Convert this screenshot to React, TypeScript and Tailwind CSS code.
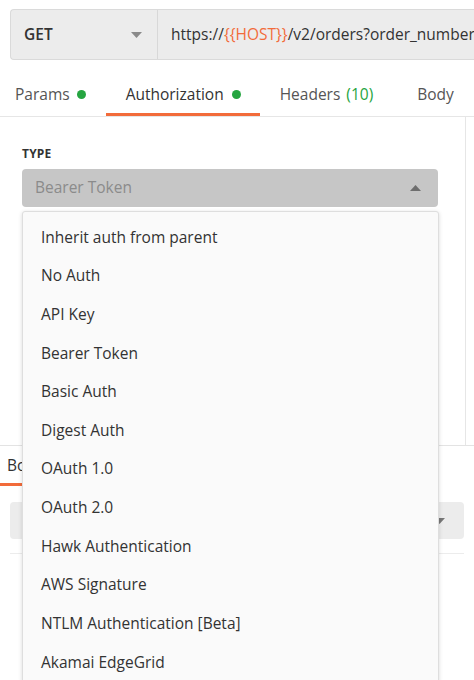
import React from 'react';

const authTypes = [
  'Inherit auth from parent',
  'No Auth',
  'API Key',
  'Bearer Token',
  'Basic Auth',
  'Digest Auth',
  'OAuth 1.0',
  'OAuth 2.0',
  'Hawk Authentication',
  'AWS Signature',
  'NTLM Authentication [Beta]',
  'Akamai EdgeGrid',
];

function Caret({ up = false, className = '' }: { up?: boolean; className?: string }) {
  return (
    <svg width="11" height="6" viewBox="0 0 11 6" className={className}>
      {up ? <path d="M0 6 L5.5 0 L11 6 Z" fill="currentColor" /> : <path d="M0 0 L11 0 L5.5 6 Z" fill="currentColor" />}
    </svg>
  );
}

export default function App() {
  return (
    <div
      className="relative w-[474px] h-[680px] overflow-hidden bg-white text-[#333]"
      style={{ fontFamily: '"Open Sans", "Noto Sans", sans-serif' }}
    >
      {/* Request bar */}
      <div className="pl-[10px] pt-[9px]">
        <div className="flex h-[51px] rounded-l-[4px] border border-r-0 border-[#dadada] bg-[#ececec]">
          <div className="flex w-[147px] shrink-0 items-center justify-between border-r border-[#d8d8d8] pl-[13px] pr-[15px]">
            <span className="text-[15.5px] font-semibold text-[#333]">GET</span>
            <Caret className="text-[#8a8a8a]" />
          </div>
          <div className="flex min-w-0 flex-1 items-center overflow-hidden whitespace-nowrap pl-[13px] text-[15.5px] text-[#333]">
            https://<span className="text-[#f26b3a]">{'{{HOST}}'}</span>/v2/orders?order_number
          </div>
        </div>
      </div>

      {/* Tabs */}
      <div className="mt-[19px] flex h-[38px] items-stretch border-b border-[#e6e6e6] text-[15.5px]">
        <div className="flex items-center pb-[6px] pl-[15px] pr-[20px] text-[#555]">
          Params<span className="ml-[7px] h-[9px] w-[9px] rounded-full bg-[#26a541]" />
        </div>
        <div className="flex items-center border-b-[3px] border-[#f26b3a] pb-[3px] pl-[20px] pr-[19px] text-[#333]">
          Authorization<span className="ml-[8px] h-[9px] w-[9px] rounded-full bg-[#26a541]" />
        </div>
        <div className="flex items-center pb-[6px] pl-[20px] pr-[20px] text-[#555]">
          Headers<span className="ml-[6px] text-[#26a541]">(10)</span>
        </div>
        <div className="flex items-center pb-[6px] pl-[24px] text-[#555]">Body</div>
      </div>

      {/* Auth panel */}
      <div className="flex h-[328px]">
        <div className="w-[466px] shrink-0 border-r border-[#e6e6e6] pl-[22px] pt-[28px]">
          <div className="text-[12px] font-bold tracking-[0.2px] text-[#333]">TYPE</div>
          <div className="mt-[6px] flex h-[38px] w-[416px] items-center justify-between rounded-[4px] bg-[#c6c6c6] pl-[13px] pr-[17px]">
            <span className="text-[15.5px] text-[#8b8b8b]">Bearer Token</span>
            <Caret up className="text-[#6e6e6e]" />
          </div>
        </div>
      </div>

      {/* Response area behind menu */}
      <div className="border-t border-[#e3e3e3]">
        <div className="flex h-[40px]">
          <div className="flex items-center border-b-[3px] border-[#f26b3a] pl-[7px] pr-[14px] pt-[3px] text-[15.5px] text-[#333]">
            Body
          </div>
        </div>
        <div className="pl-[10px] pr-[10px] pt-[16px]">
          <div className="flex h-[37px] items-center justify-end rounded-[4px] bg-[#ececec] pr-[19px]">
            <Caret className="text-[#777]" />
          </div>
          <div className="mt-[14px] border-t border-[#ececec]" />
        </div>
      </div>

      {/* Auth type menu */}
      <div className="absolute left-[22px] top-[211px] w-[417px] rounded-[3px] border border-[#dedede] bg-[#fafafa] pt-[6px] shadow-[0_1px_4px_rgba(0,0,0,0.15)]">
        {authTypes.map(type => (
          <div key={type} className="flex h-[38.64px] items-center pl-[18px] text-[15.5px] text-[#333]">
            {type}
          </div>
        ))}
      </div>
    </div>
  );
}
